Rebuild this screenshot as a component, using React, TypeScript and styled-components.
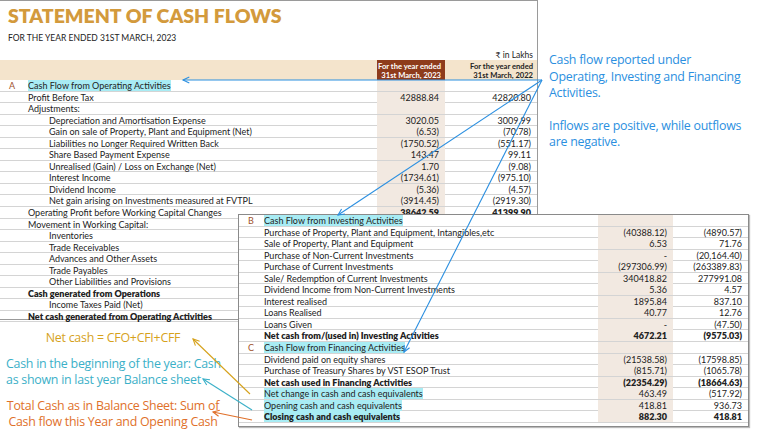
import React from 'react'
import styled, { createGlobalStyle } from 'styled-components'

const Global = createGlobalStyle`
  body { margin: 0; background: #fff; }
`

const Page = styled.div`
  position: relative;
  width: 768px;
  height: 429px;
  overflow: hidden;
  display: grid;
  grid-template-columns: 538px 1fr;
  grid-template-rows: 320px 1fr;
  font-family: Lato, 'Noto Sans', sans-serif;
`

const Sheet = styled.div`
  border: 1px solid #9a9a9a;
  border-left: none;
  background: #fff;
  padding-top: 4px;
  box-sizing: border-box;
`

const Title = styled.h1`
  margin: 0 0 0 8px;
  font: 800 19.5px Lato, sans-serif;
  color: #d39a3c;
  line-height: 22px;
`

const Sub = styled.div`
  margin: 6px 0 0 8px;
  font-size: 8.5px;
  color: #222;
`

const Unit = styled.div`
  text-align: right;
  font-size: 8.5px;
  padding-right: 4px;
  margin-top: 7px;
  color: #222;
`

const Row = styled.div<{ $cols: string }>`
  display: grid;
  grid-template-columns: ${p => p.$cols};
  height: 11.55px;
  line-height: 11px;
  font-size: 9px;
  color: #222;
  border-bottom: 1px solid #d4d4d4;
  box-sizing: border-box;
`

const HeadRow = styled.div<{ $cols: string }>`
  display: grid;
  grid-template-columns: ${p => p.$cols};
  background: #f4e4cc;
  height: 20px;
  font-size: 7.6px;
  font-weight: 700;
  line-height: 9px;
`

const HeadCell = styled.div<{ $dark?: boolean }>`
  text-align: right;
  padding: 2px 4px 0 0;
  background: ${p => (p.$dark ? '#8e3b1b' : 'transparent')};
  color: ${p => (p.$dark ? '#fff' : '#222')};
`

const Letter = styled.div`
  color: #a0522d;
  padding-left: 9px;
`

const Label = styled.div<{ $indent?: boolean; $bold?: boolean }>`
  padding-left: ${p => (p.$indent ? '21px' : '0')};
  font-weight: ${p => (p.$bold ? 800 : 400)};
  white-space: nowrap;
`

const Mark = styled.span`
  background: #a8ecf4;
`

const Num = styled.div<{ $shade?: boolean; $bold?: boolean }>`
  text-align: right;
  padding-right: 6px;
  background: ${p => (p.$shade ? '#f2e9e1' : 'transparent')};
  font-weight: ${p => (p.$bold ? 800 : 400)};
`

const Overlay = styled.div`
  position: absolute;
  left: 238px;
  top: 214px;
  width: 511px;
  height: 213px;
  background: #fff;
  border: 1px solid #8a8a8a;
  box-shadow: 1px 1px 1px #bbb;
  box-sizing: border-box;
`

const Note = styled.div<{ $color: string; $align?: string }>`
  color: ${p => p.$color};
  font: 12.4px 'Open Sans', 'Noto Sans', sans-serif;
  letter-spacing: -0.25px;
  line-height: 16.5px;
  white-space: nowrap;
  text-align: ${p => p.$align || 'left'};
`

const RightNotes = styled.div`
  padding: 52px 0 0 11px;
  display: flex;
  flex-direction: column;
  gap: 16px;
`

const LeftNotes = styled.div`
  padding: 10px 0 0 6px;
  display: flex;
  flex-direction: column;
  gap: 9px;
  width: 214px;
`

const Arrows = styled.svg`
  position: absolute;
  inset: 0;
  pointer-events: none;
`

type R = [string, string, string, string, boolean?, boolean?, string?]
// label, 2023, 2022, letter, indent, bold, highlight

const colsA = '28px 1fr 68px 92px'
const colsB = '25px 1fr 75px 75px'

const rowsA: R[] = [
  ['Cash Flow from Operating Activities', '', '', 'A', false, false, 'hl'],
  ['Profit Before Tax', '42888.84', '42820.80', ''],
  ['Adjustments:', '', '', ''],
  ['Depreciation and Amortisation Expense', '3020.05', '3009.99', '', true],
  ['Gain on sale of Property, Plant and Equipment (Net)', '(6.53)', '(70.78)', '', true],
  ['Liabilities no Longer Required Written Back', '(1750.52)', '(551.17)', '', true],
  ['Share Based Payment Expense', '143.47', '99.11', '', true],
  ['Unrealised (Gain) / Loss on Exchange (Net)', '1.70', '(9.08)', '', true],
  ['Interest Income', '(1734.61)', '(975.10)', '', true],
  ['Dividend Income', '(5.36)', '(4.57)', '', true],
  ['Net gain arising on Investments measured at FVTPL', '(3914.45)', '(2919.30)', '', true],
  ['Operating Profit before Working Capital Changes', '38642.59', '41399.90', '', false, false, 'bn'],
  ['Movement in Working Capital:', '', '', ''],
  ['Inventories', '', '', '', true],
  ['Trade Receivables', '', '', '', true],
  ['Advances and Other Assets', '', '', '', true],
  ['Trade Payables', '', '', '', true],
  ['Other Liabilities and Provisions', '', '', '', true],
  ['Cash generated from Operations', '', '', '', false, true],
  ['Income Taxes Paid (Net)', '', '', '', true],
  ['Net cash generated from Operating Activities', '', '', '', false, true],
]

const rowsB: R[] = [
  ['Cash Flow from Investing Activities', '', '', 'B', false, false, 'hl'],
  ['Purchase of Property, Plant and Equipment, Intangibles,etc', '(40388.12)', '(4890.57)', ''],
  ['Sale of Property, Plant and Equipment', '6.53', '71.76', ''],
  ['Purchase of Non-Current Investments', '-', '(20,164.40)', ''],
  ['Purchase of Current Investments', '(297306.99)', '(263389.83)', ''],
  ['Sale/ Redemption of Current Investments', '340418.82', '277991.08', ''],
  ['Dividend Income from Non-Current Investments', '5.36', '4.57', ''],
  ['Interest realised', '1895.84', '837.10', ''],
  ['Loans Realised', '40.77', '12.76', ''],
  ['Loans Given', '-', '(47.50)', ''],
  ['Net cash from/(used in) Investing Activities', '4672.21', '(9575.03)', '', false, true],
  ['Cash Flow from Financing Activities', '', '', 'C', false, false, 'hl'],
  ['Dividend paid on equity shares', '(21538.58)', '(17598.85)', ''],
  ['Purchase of Treasury Shares by VST ESOP Trust', '(815.71)', '(1065.78)', ''],
  ['Net cash used in Financing Activities', '(22354.29)', '(18664.63)', '', false, true],
  ['Net change in cash and cash equivalents', '463.49', '(517.92)', '', false, false, 'hl'],
  ['Opening cash and cash equivalents', '418.81', '936.73', '', false, false, 'hl'],
  ['Closing cash and cash equivalents', '882.30', '418.81', '', false, true, 'hl'],
]

function Rows({ rows, cols }: { rows: R[]; cols: string }) {
  return (
    <>
      {rows.map(([label, a, b, letter, indent, bold, hl], i) => (
        <Row key={i} $cols={cols}>
          <Letter>{letter}</Letter>
          <Label $indent={indent} $bold={bold}>
            {hl === 'hl' ? <Mark>{label}</Mark> : label}
          </Label>
          <Num $shade $bold={bold || hl === 'bn'}>{a}</Num>
          <Num $bold={bold || hl === 'bn'}>{b}</Num>
        </Row>
      ))}
    </>
  )
}

function Arrow({ x1, y1, x2, y2, c }: { x1: number; y1: number; x2: number; y2: number; c: string }) {
  const a = Math.atan2(y2 - y1, x2 - x1)
  const l = 7
  const w = 0.45
  const p1 = [x2 - l * Math.cos(a - w), y2 - l * Math.sin(a - w)]
  const p2 = [x2 - l * Math.cos(a + w), y2 - l * Math.sin(a + w)]
  return (
    <g stroke={c} strokeWidth={1.1} fill="none">
      <line x1={x1} y1={y1} x2={x2} y2={y2} />
      <polyline points={`${p1[0]},${p1[1]} ${x2},${y2} ${p2[0]},${p2[1]}`} />
    </g>
  )
}

export default function App() {
  return (
    <>
      <Global />
      <Page>
        <Sheet>
          <Title>STATEMENT OF CASH FLOWS</Title>
          <Sub>FOR THE YEAR ENDED 31ST MARCH, 2023</Sub>
          <Unit>₹ in Lakhs</Unit>
          <HeadRow $cols={colsA}>
            <div />
            <div />
            <HeadCell $dark>For the year ended<br />31st March, 2023</HeadCell>
            <HeadCell>For the year ended<br />31st March, 2022</HeadCell>
          </HeadRow>
          <Rows rows={rowsA} cols={colsA} />
        </Sheet>
        <RightNotes>
          <Note $color="#2b8fe0">Cash flow reported under<br />Operating, Investing and Financing<br />Activities.</Note>
          <Note $color="#2b8fe0">Inflows are positive, while outflows<br />are negative.</Note>
        </RightNotes>
        <LeftNotes>
          <Note $color="#d6a21c" $align="center">Net cash = CFO+CFI+CFF</Note>
          <Note $color="#3bb0c8">Cash in the beginning of the year: Cash<br />as shown in last year Balance sheet</Note>
          <Note $color="#e0702a" $align="center">Total Cash as in Balance Sheet: Sum of<br />Cash flow this Year and Opening Cash</Note>
        </LeftNotes>
        <Overlay>
          <Rows rows={rowsB} cols={colsB} />
        </Overlay>
        <Arrows width="768" height="429" viewBox="0 0 768 429">
          <Arrow x1={542} y1={80} x2={183} y2={80} c="#2b8fe0" />
          <Arrow x1={542} y1={80} x2={338} y2={215} c="#2b8fe0" />
          <Arrow x1={542} y1={80} x2={404} y2={352} c="#2b8fe0" />
          <Arrow x1={250} y1={394} x2={193} y2={339} c="#d6a21c" />
          <Arrow x1={252} y1={410} x2={203} y2={379} c="#3bb0c8" />
          <Arrow x1={252} y1={420} x2={213} y2={412} c="#e0702a" />
        </Arrows>
      </Page>
    </>
  )
}
